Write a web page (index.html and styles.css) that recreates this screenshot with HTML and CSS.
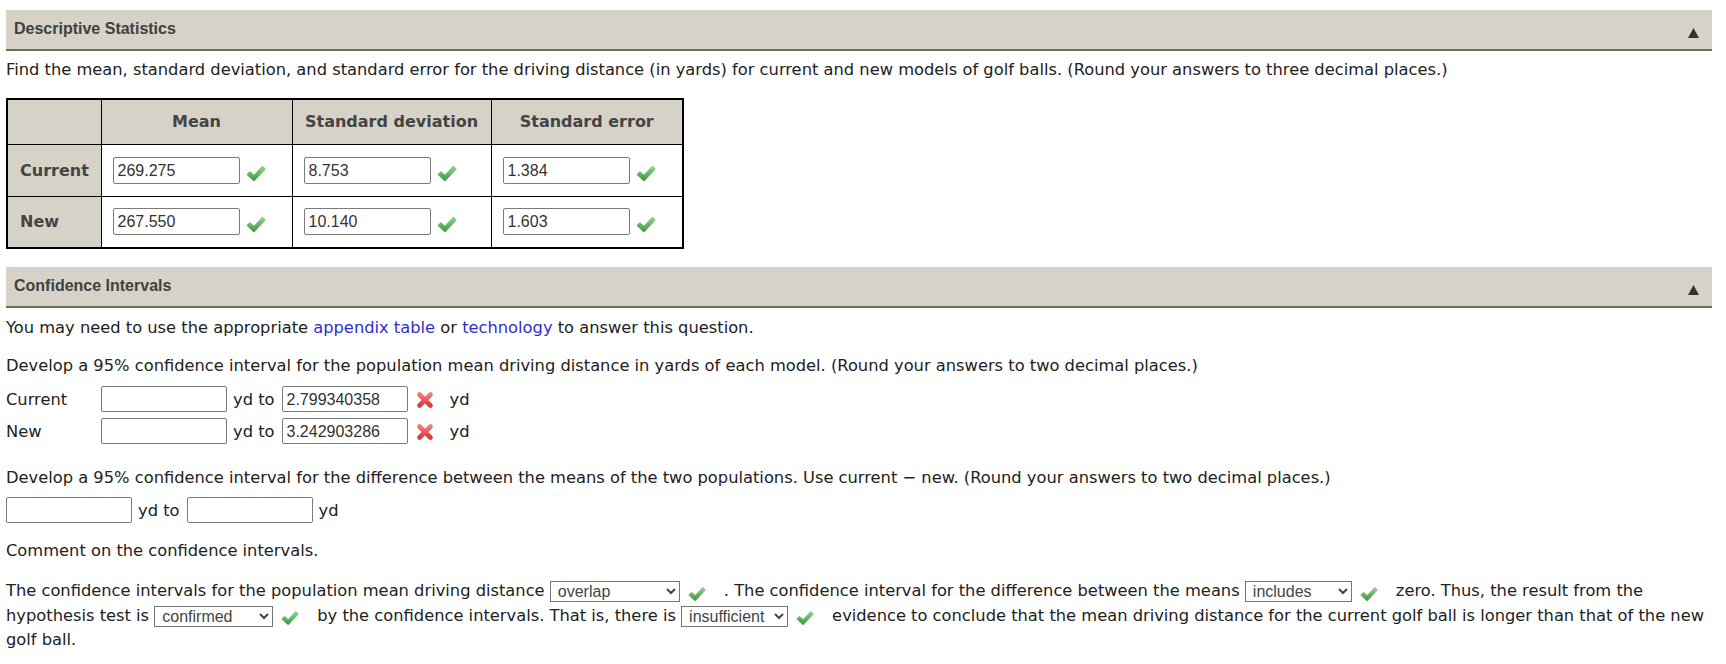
FILE: index.html
```html
<!DOCTYPE html>
<html>
<head>
<meta charset="utf-8">
<link rel="stylesheet" href="styles.css">
</head>
<body>
<svg class="defs" width="0" height="0" aria-hidden="true">
  <defs>
    <linearGradient id="gchk" x1="0" y1="0" x2="0" y2="1">
      <stop offset="0" stop-color="#8ed68e"/>
      <stop offset="1" stop-color="#3d973d"/>
    </linearGradient>
    <linearGradient id="gx" x1="0" y1="0" x2="0" y2="1">
      <stop offset="0" stop-color="#f47a7a"/>
      <stop offset="1" stop-color="#dc3b3b"/>
    </linearGradient>
    <symbol id="chk" viewBox="0 0 20 17">
      <path d="M1.4 9.6 L3.9 7.1 L7.9 10.8 L16.4 1.6 L18.9 4.1 L7.9 15.6 Z" fill="url(#gchk)" stroke="url(#gchk)" stroke-width="1.4" stroke-linejoin="round"/>
    </symbol>
    <symbol id="xx" viewBox="0 0 18 18">
      <path d="M3.5 3.5 L14.5 14.5 M14.5 3.5 L3.5 14.5" stroke="url(#gx)" stroke-width="4.6" stroke-linecap="round" fill="none"/>
    </symbol>
  </defs>
</svg>
<div class="page">
  <div class="sec-head">
    <span class="sec-title">Descriptive Statistics</span>
    <svg class="tri" viewBox="0 0 11 10"><polygon points="0,10 5.5,0 11,10" fill="#333"/></svg>
  </div>
  <p class="q q-find">Find the mean, standard deviation, and standard error for the driving distance (in yards) for current and new models of golf balls. (Round your answers to three decimal places.)</p>

  <table class="stats">
    <colgroup>
      <col class="c0"><col class="c1"><col class="c2"><col class="c3">
    </colgroup>
    <tr class="hrow">
      <th></th><th>Mean</th><th>Standard deviation</th><th>Standard error</th>
    </tr>
    <tr class="brow">
      <th class="rh">Current</th>
      <td><input class="num" value="269.275"><svg class="ok"><use href="#chk"/></svg></td>
      <td><input class="num" value="8.753"><svg class="ok"><use href="#chk"/></svg></td>
      <td><input class="num" value="1.384"><svg class="ok"><use href="#chk"/></svg></td>
    </tr>
    <tr class="brow">
      <th class="rh">New</th>
      <td><input class="num" value="267.550"><svg class="ok"><use href="#chk"/></svg></td>
      <td><input class="num" value="10.140"><svg class="ok"><use href="#chk"/></svg></td>
      <td><input class="num" value="1.603"><svg class="ok"><use href="#chk"/></svg></td>
    </tr>
  </table>

  <div class="sec-head sec2">
    <span class="sec-title">Confidence Intervals</span>
    <svg class="tri" viewBox="0 0 11 10"><polygon points="0,10 5.5,0 11,10" fill="#333"/></svg>
  </div>
  <p class="q q-you">You may need to use the appropriate <a class="lnk" href="#">appendix table</a> or <a class="lnk" href="#">technology</a> to answer this question.</p>
  <p class="q q-dev">Develop a 95% confidence interval for the population mean driving distance in yards of each model. (Round your answers to two decimal places.)</p>
  <div class="ci-rows">
    <div class="ci-row">
      <span class="ci-label">Current</span>
      <input class="num ci">
      <span class="unit-to">yd to</span>
      <input class="num ci" value="2.799340358">
      <svg class="bad"><use href="#xx"/></svg>
      <span class="unit">yd</span>
    </div>
    <div class="ci-row">
      <span class="ci-label">New</span>
      <input class="num ci">
      <span class="unit-to">yd to</span>
      <input class="num ci" value="3.242903286">
      <svg class="bad"><use href="#xx"/></svg>
      <span class="unit">yd</span>
    </div>
  </div>
  <p class="q q-diff">Develop a 95% confidence interval for the difference between the means of the two populations. Use current &minus; new. (Round your answers to two decimal places.)</p>
  <div class="ci-row diff-row">
    <input class="num ci">
    <span class="unit-to">yd to</span>
    <input class="num ci">
    <span class="unit-plain">yd</span>
  </div>
  <p class="q q-comment">Comment on the confidence intervals.</p>
  <p class="q q-para">The confidence intervals for the population mean driving distance <select class="sel w-overlap"><option>overlap</option></select><svg class="ok ok-in"><use href="#chk"/></svg>. The confidence interval for the difference between the means <select class="sel w-includes"><option>includes</option></select><svg class="ok ok-in"><use href="#chk"/></svg>zero. Thus, the result from the<br>hypothesis test is <select class="sel w-confirmed"><option>confirmed</option></select><svg class="ok ok-in"><use href="#chk"/></svg>by the confidence intervals. That is, there is <select class="sel w-insuff"><option>insufficient</option></select><svg class="ok ok-in"><use href="#chk"/></svg>evidence to conclude that the mean driving distance for the current golf ball is longer than that of the new<br>golf ball.</p>
</div>
</body>
</html>
```

FILE: styles.css
```css
body {
  margin: 0;
  background: #fff;
  font-family: "DejaVu Sans", Verdana, sans-serif;
  font-size: 16.3px;
  color: #222;
}

.defs {
  position: absolute;
  width: 0;
  height: 0;
}

.page {
  padding: 10px 14px 0 6px;
}

.sec-head {
  height: 39px;
  background: #d6d2c8;
  border-bottom: 2px solid #766b5b;
  display: flex;
  align-items: center;
  justify-content: space-between;
  padding: 0 13px 0 8px;
}

.sec-title {
  font-family: "Liberation Sans", Arial, sans-serif;
  font-weight: bold;
  font-size: 16px;
  color: #404040;
  margin-top: -2px;
}

.tri {
  width: 11px;
  height: 10px;
  margin-top: 7px;
}

p {
  margin: 0;
  line-height: 20px;
}

.q-find { margin-top: 9px; }

.stats {
  margin-top: 18px;
  border-collapse: collapse;
  border: 2px solid #000;
  table-layout: fixed;
  width: 676px;
  font-size: 16px;
}

.c0 { width: 94px; }
.c1 { width: 191px; }
.c2 { width: 199px; }
.c3 { width: 192px; }

.stats th,
.stats td {
  border: 1px solid #000;
  padding: 0;
}

.stats th {
  background: #d6d2c8;
  color: #444;
  font-weight: bold;
  text-align: center;
}

.stats th.rh {
  text-align: left;
  padding-left: 12px;
}

.hrow { height: 45px; }
.brow { height: 52px; }

.stats td {
  padding-left: 11px;
  white-space: nowrap;
}

.num {
  font-family: "Liberation Sans", Arial, sans-serif;
  font-size: 16px;
  color: #333;
  width: 127px;
  height: 27px;
  box-sizing: border-box;
  border: 1px solid #7b7b7b;
  border-radius: 2px;
  padding: 1px 4px 0 4px;
  margin: 0;
  background: #fff;
  vertical-align: middle;
  outline: none;
}

.ok {
  width: 20px;
  height: 17px;
  margin-left: 6px;
  vertical-align: middle;
  position: relative;
  top: 3px;
}

.sec2 { margin-top: 18px; }

.lnk {
  color: #2f2fd0;
  text-decoration: none;
}

.q-you { margin-top: 10px; }
.q-dev { margin-top: 18px; }

.ci-rows {
  margin-top: 7px;
}

.ci-row {
  display: flex;
  align-items: center;
  height: 32px;
}

.ci-label {
  width: 95px;
}

.num.ci {
  width: 126px;
  height: 26px;
}

.unit-to {
  margin: 0 7px 0 6px;
}

.bad {
  width: 18px;
  height: 18px;
  margin-left: 8px;
  margin-top: 2px;
}

.unit {
  margin-left: 16px;
}

.unit-plain {
  margin-left: 6px;
}

.q-diff { margin-top: 21px; }
.diff-row { margin-top: 6px; }
.q-comment { margin-top: 15px; }

.q-para {
  margin-top: 18px;
  line-height: 24.5px;
  white-space: nowrap;
}

.sel {
  font-family: "Liberation Sans", Arial, sans-serif;
  font-size: 16px;
  color: #444;
  height: 21px;
  box-sizing: border-box;
  border: 1px solid #767676;
  border-radius: 0;
  padding: 0 0 0 3px;
  margin: 0;
  background: #fff;
  vertical-align: middle;
}

.w-overlap { width: 130px; }
.w-includes { width: 107px; }
.w-confirmed { width: 119px; }
.w-insuff { width: 107px; }

.ok-in {
  width: 18px;
  height: 16px;
  margin: 0 18px 0 8px;
  top: 2px;
}
```
